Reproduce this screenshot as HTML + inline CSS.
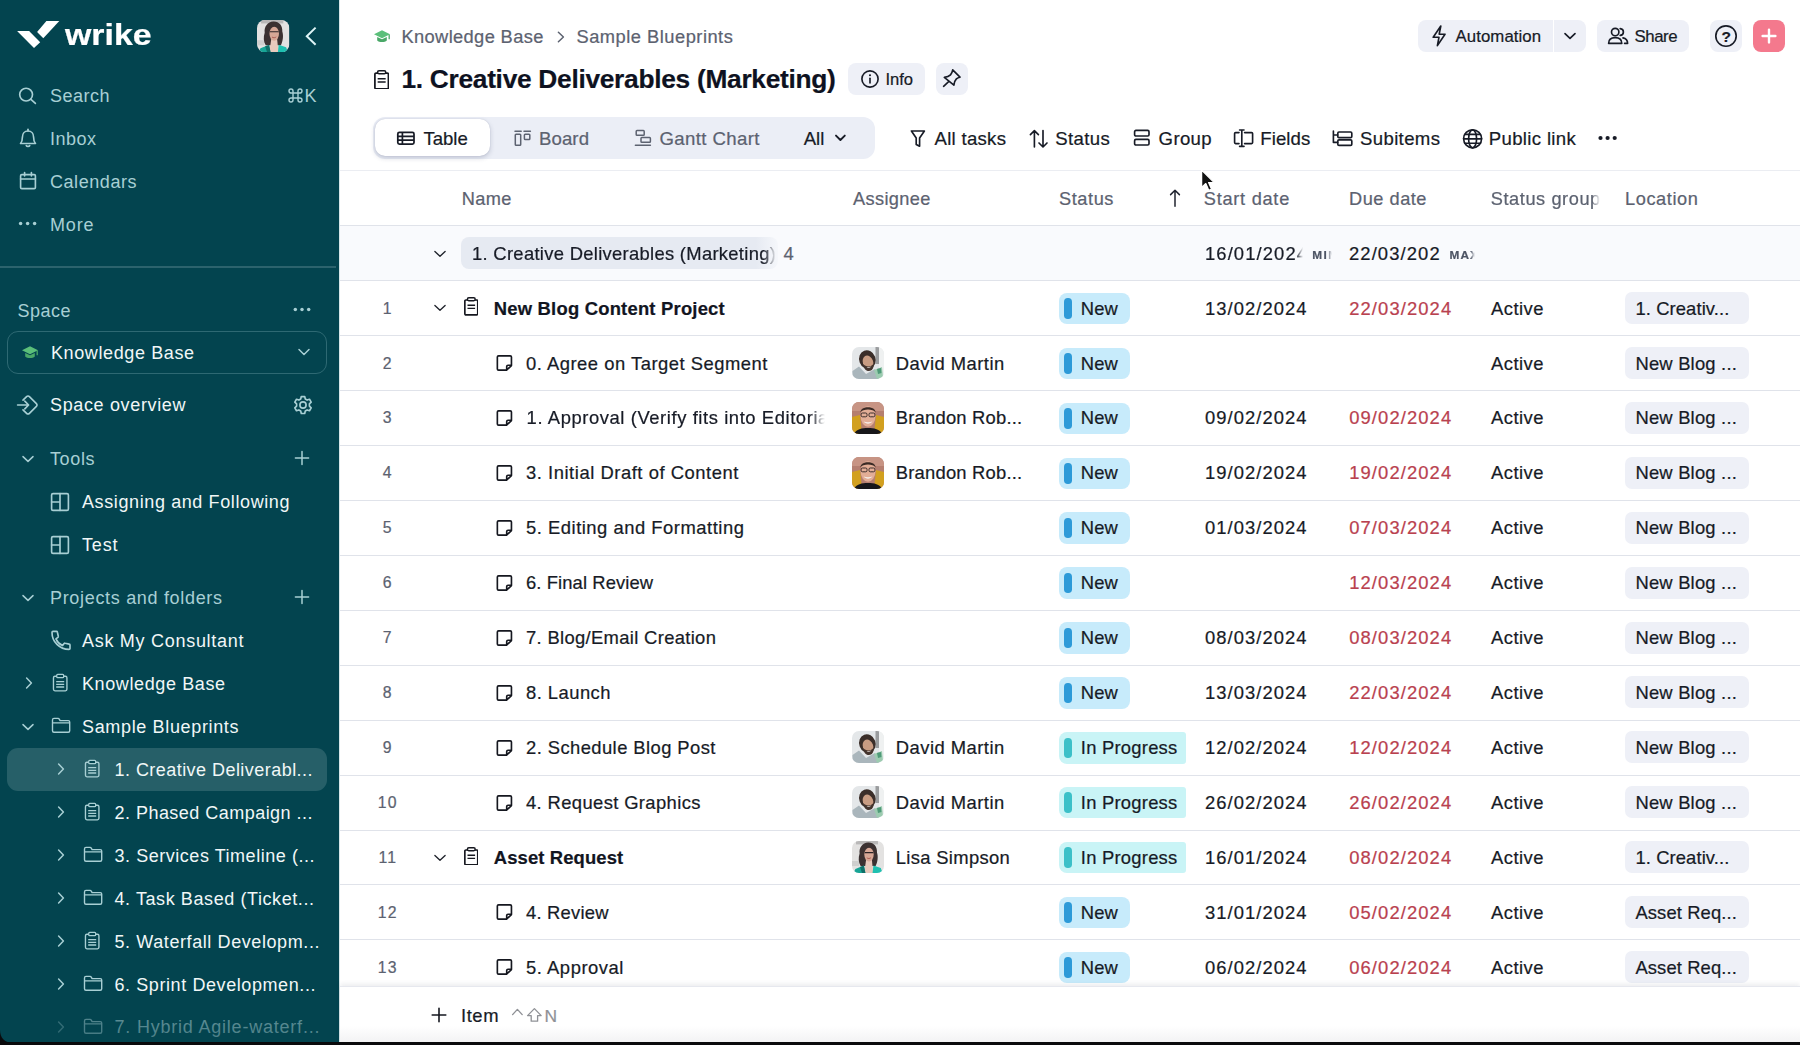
<!DOCTYPE html>
<html><head><meta charset="utf-8"><title>Wrike</title>
<style>
html,body{margin:0;padding:0;overflow:hidden;}
body{width:1800px;height:1045px;overflow:hidden;background:#fff;font-family:"Liberation Sans",sans-serif;position:relative;}
.t{position:absolute;white-space:nowrap;-webkit-text-stroke:0.22px currentColor;}
.b{position:absolute;}
</style></head><body>
<div class="b" style="left:0.00px;top:0.00px;width:339.00px;height:1045.00px;background:#03444f;"></div>
<div class="b" style="left:339.00px;top:0.00px;width:1.00px;height:1045.00px;background:#d6e6e8;"></div>
<div class="b" style="left:0.00px;top:266.40px;width:336.00px;height:1.20px;background:#2c636d;"></div>
<svg class="b" style="left:10.00px;top:12.00px;" width="60" height="44" viewBox="0 0 60 44" fill="none"><polygon points="7.1,19.1 19.1,19.1 30.2,30.2 24,36" fill="#fff"/><polygon points="27.1,20 36.4,8.9 49.3,8.9 33.3,26.2" fill="#fff"/></svg>
<div class="t" style="left:64.80px;top:19.70px;height:30px;line-height:30px;font-size:28.6px;color:#fff;transform-origin:0 50%;transform:scaleX(1.1841);font-weight:700;">wrike</div>
<svg class="b" style="left:257.20px;top:20.00px;" width="32.4" height="32.4" viewBox="0 0 32 32" fill="none"><defs><clipPath id="ua"><rect width="32" height="32" rx="8"/></clipPath></defs><g clip-path="url(#ua)"><rect width="32" height="32" fill="#e3e2e1"/><rect x="4" y="0" width="22" height="3.4" fill="#b9b8b8"/><rect x="0" y="20" width="7" height="5" fill="#cfcfce"/>
<path d="M16 1.6 C21.6 1.2 25.4 5.6 25 11.4 C26.4 15.6 25.6 21.2 23.6 25 L8.6 25 C6.4 21.6 6.2 16.6 7.6 12.6 C6.8 6.8 10.6 1.8 16 1.6 Z" fill="#3b3131"/>
<path d="M14.2 18 L19.8 18 L21.2 32 L12.2 32 Z" fill="#e8cabd"/>
<ellipse cx="17" cy="13.6" rx="4.7" ry="6.9" fill="#d6a796"/>
<path d="M12.8 11.6 H21.4" stroke="#2a2224" stroke-width="1.1"/>
<path d="M14.8 16.8 C16 17.8 18 17.8 19 16.6" stroke="#a9584f" stroke-width="0.9" fill="none"/>
<path d="M1.6 32 L3.4 28 L11.8 24.6 L13.4 32 Z" fill="#17a596"/><path d="M8 26 L12 24.6 L13.4 32 L10 32Z" fill="#0f6f68"/>
<path d="M20.6 32 L21.4 24.4 L28.8 27 L30.6 32 Z" fill="#1fc0b0"/></g></svg>
<svg class="b" style="left:302.00px;top:24.00px;" width="20" height="24" viewBox="0 0 20 24" fill="none"><path d="M13.6 3.6 L4.8 12.2 L13.6 20.8" stroke="#def4f6" stroke-width="2" stroke-linecap="butt" stroke-linejoin="miter"/></svg>
<svg class="b" style="left:16.00px;top:83.00px;" width="24" height="24" viewBox="0 0 24 24" fill="none"><circle cx="10.1" cy="11.6" r="6.4" stroke="#a8cfd4" stroke-width="1.65" stroke-linecap="round" stroke-linejoin="round"/><path d="M14.9 16.3 L19.4 20.4" stroke="#a8cfd4" stroke-width="1.65" stroke-linecap="round" stroke-linejoin="round"/></svg>
<div class="t" style="left:50.00px;top:80.60px;height:30px;line-height:30px;font-size:18px;color:#a8cfd4;letter-spacing:0.493px;-webkit-text-stroke:0;">Search</div>
<svg class="b" style="left:287.00px;top:86.50px;" width="17" height="17" viewBox="0 0 17 17" fill="none"><path d="M6 6 H11 V11 H6 Z M6 6 H4.2 C2.9 6 2 5 2 3.9 C2 2.8 2.9 2 4 2 C5.1 2 6 2.9 6 4 Z M11 6 V4 C11 2.9 11.9 2 13 2 C14.1 2 15 2.8 15 3.9 C15 5 14.1 6 12.8 6 Z M11 11 H12.8 C14.1 11 15 12 15 13.1 C15 14.2 14.1 15 13 15 C11.9 15 11 14.1 11 13 Z M6 11 V13 C6 14.1 5.1 15 4 15 C2.9 15 2 14.2 2 13.1 C2 12 2.9 11 4.2 11 Z" stroke="#a8cfd4" stroke-width="1.4" stroke-linejoin="round"/></svg>
<div class="t" style="left:304.50px;top:80.60px;height:30px;line-height:30px;font-size:18px;color:#a8cfd4;-webkit-text-stroke:0;">K</div>
<svg class="b" style="left:16.00px;top:126.00px;" width="24" height="24" viewBox="0 0 24 24" fill="none"><path d="M4.5 17.5 H19.5 C18 16 17.6 14 17.6 11.2 C17.6 7.6 15.4 5 12 5 C8.6 5 6.4 7.6 6.4 11.2 C6.4 14 6 16 4.5 17.5 Z" stroke="#a8cfd4" stroke-width="1.65" stroke-linecap="round" stroke-linejoin="round"/><path d="M10.3 19.6 C10.8 20.6 13.2 20.6 13.7 19.6" stroke="#a8cfd4" stroke-width="1.65" stroke-linecap="round" stroke-linejoin="round"/><path d="M12 3.2 V5" stroke="#a8cfd4" stroke-width="1.65" stroke-linecap="round" stroke-linejoin="round"/></svg>
<div class="t" style="left:50.00px;top:123.60px;height:30px;line-height:30px;font-size:18px;color:#a8cfd4;letter-spacing:0.492px;-webkit-text-stroke:0;">Inbox</div>
<svg class="b" style="left:16.00px;top:169.00px;" width="24" height="24" viewBox="0 0 24 24" fill="none"><rect x="4.6" y="5.6" width="14.8" height="14" rx="1.2" stroke="#a8cfd4" stroke-width="1.65" stroke-linecap="round" stroke-linejoin="round"/><path d="M4.6 10 H19.4 M8.6 3.6 V7 M15.4 3.6 V7" stroke="#a8cfd4" stroke-width="1.65" stroke-linecap="round" stroke-linejoin="round"/></svg>
<div class="t" style="left:50.00px;top:166.60px;height:30px;line-height:30px;font-size:18px;color:#a8cfd4;letter-spacing:0.556px;-webkit-text-stroke:0;">Calendars</div>
<svg class="b" style="left:16.00px;top:212.00px;" width="24" height="24" viewBox="0 0 24 24" fill="none"><circle cx="4.6" cy="11.6" r="1.75" fill="#a8cfd4"/><circle cx="11.6" cy="11.6" r="1.75" fill="#a8cfd4"/><circle cx="18.6" cy="11.6" r="1.75" fill="#a8cfd4"/></svg>
<div class="t" style="left:50.00px;top:209.60px;height:30px;line-height:30px;font-size:18px;color:#a8cfd4;letter-spacing:0.829px;-webkit-text-stroke:0;">More</div>
<div class="t" style="left:17.50px;top:295.90px;height:30px;line-height:30px;font-size:18px;color:#a8cfd4;letter-spacing:0.490px;-webkit-text-stroke:0;">Space</div>
<svg class="b" style="left:291.00px;top:298.40px;" width="24" height="24" viewBox="0 0 24 24" fill="none"><circle cx="4.3" cy="11.5" r="1.75" fill="#a8cfd4"/><circle cx="11" cy="11.5" r="1.75" fill="#a8cfd4"/><circle cx="17.7" cy="11.5" r="1.75" fill="#a8cfd4"/></svg>
<div class="b" style="left:7.00px;top:331.00px;width:319.50px;height:42.60px;background:transparent;border-radius:11px;box-sizing:border-box;border:1.5px solid #2e6973;"></div>
<svg class="b" style="left:21.00px;top:343.50px;" width="18" height="17" viewBox="0 0 18 17" fill="none"><path d="M1 6.2 L9 2.2 L17 6.2 L9 10.2 Z" fill="#5bbf7a"/><path d="M4.2 8.9 V12.4 C6 14.6 12 14.6 13.8 12.4 V8.9 L9 11.3 Z" fill="#4aa868"/><path d="M16.2 6.6 V11.2" stroke="#4aa868" stroke-width="1.3"/></svg>
<div class="t" style="left:51.00px;top:337.60px;height:30px;line-height:30px;font-size:18px;color:#f1f7f7;letter-spacing:0.608px;-webkit-text-stroke:0;">Knowledge Base</div>
<svg class="b" style="left:295.00px;top:344.00px;" width="18" height="16" viewBox="0 0 18 16" fill="none"><path d="M4 5.5 L9 10.5 L14 5.5" stroke="#a8cfd4" stroke-width="1.5" stroke-linecap="round" stroke-linejoin="round"/></svg>
<svg class="b" style="left:16.00px;top:393.00px;" width="24" height="24" viewBox="0 0 24 24" fill="none"><path d="M1.6 12 H12.4 M8.8 8.2 L12.6 12 L8.8 15.8" stroke="#a8cfd4" stroke-width="1.65" stroke-linecap="round" stroke-linejoin="round"/><path d="M7 7.2 L10.6 3.6 C11.4 2.8 12.6 2.8 13.4 3.6 L20.4 10.6 C21.2 11.4 21.2 12.6 20.4 13.4 L13.4 20.4 C12.6 21.2 11.4 21.2 10.6 20.4 L7 16.8" stroke="#a8cfd4" stroke-width="1.65" stroke-linecap="round" stroke-linejoin="round"/></svg>
<div class="t" style="left:50.00px;top:390.10px;height:30px;line-height:30px;font-size:18px;color:#f1f7f7;letter-spacing:0.649px;-webkit-text-stroke:0;">Space overview</div>
<svg class="b" style="left:291.00px;top:393.00px;" width="24" height="24" viewBox="0 0 24 24" fill="none"><circle cx="12" cy="12" r="3.1" stroke="#a8cfd4" stroke-width="1.65" stroke-linecap="round" stroke-linejoin="round"/><path d="M10.3 2.8 H13.7 L14.3 5.3 L16.1 6.3 L18.5 5.5 L20.2 8.4 L18.4 10.2 V12.3 L20.2 14.1 L18.5 17 L16.1 16.2 L14.3 17.2 L13.7 19.7 H10.3 L9.7 17.2 L7.9 16.2 L5.5 17 L3.8 14.1 L5.6 12.3 V10.2 L3.8 8.4 L5.5 5.5 L7.9 6.3 L9.7 5.3 Z" stroke="#a8cfd4" stroke-width="1.65" stroke-linecap="round" stroke-linejoin="round" transform="translate(0 0.75)"/></svg>
<svg class="b" style="left:19.00px;top:450.50px;" width="18" height="16" viewBox="0 0 18 16" fill="none"><path d="M4 5.6 L9 10.4 L14 5.6" stroke="#a8cfd4" stroke-width="1.5" stroke-linecap="round" stroke-linejoin="round"/></svg>
<div class="t" style="left:50.00px;top:443.60px;height:30px;line-height:30px;font-size:18px;color:#a8cfd4;letter-spacing:0.620px;-webkit-text-stroke:0;">Tools</div>
<svg class="b" style="left:292.00px;top:447.50px;" width="20" height="20" viewBox="0 0 20 20" fill="none"><path d="M10 3.4 V16.6 M3.4 10 H16.6" stroke="#a8cfd4" stroke-width="1.5" stroke-linecap="round"/></svg>
<svg class="b" style="left:49.00px;top:490.80px;" width="22" height="22" viewBox="0 0 22 22" fill="none"><rect x="2.6" y="2.6" width="16.8" height="16.8" rx="1.4" stroke="#a8cfd4" stroke-width="1.65" stroke-linecap="round" stroke-linejoin="round"/><path d="M11 2.6 V19.4 M2.6 11 H11" stroke="#a8cfd4" stroke-width="1.65" stroke-linecap="round" stroke-linejoin="round"/></svg>
<div class="t" style="left:82.00px;top:486.60px;height:30px;line-height:30px;font-size:18px;color:#f1f7f7;letter-spacing:0.608px;-webkit-text-stroke:0;">Assigning and Following</div>
<svg class="b" style="left:49.00px;top:533.80px;" width="22" height="22" viewBox="0 0 22 22" fill="none"><rect x="2.6" y="2.6" width="16.8" height="16.8" rx="1.4" stroke="#a8cfd4" stroke-width="1.65" stroke-linecap="round" stroke-linejoin="round"/><path d="M11 2.6 V19.4 M2.6 11 H11" stroke="#a8cfd4" stroke-width="1.65" stroke-linecap="round" stroke-linejoin="round"/></svg>
<div class="t" style="left:82.00px;top:529.60px;height:30px;line-height:30px;font-size:18px;color:#f1f7f7;letter-spacing:0.829px;-webkit-text-stroke:0;">Test</div>
<svg class="b" style="left:19.00px;top:589.50px;" width="18" height="16" viewBox="0 0 18 16" fill="none"><path d="M4 5.6 L9 10.4 L14 5.6" stroke="#a8cfd4" stroke-width="1.5" stroke-linecap="round" stroke-linejoin="round"/></svg>
<div class="t" style="left:50.00px;top:582.60px;height:30px;line-height:30px;font-size:18px;color:#a8cfd4;letter-spacing:0.680px;-webkit-text-stroke:0;">Projects and folders</div>
<svg class="b" style="left:292.00px;top:587.00px;" width="20" height="20" viewBox="0 0 20 20" fill="none"><path d="M10 3.4 V16.6 M3.4 10 H16.6" stroke="#a8cfd4" stroke-width="1.5" stroke-linecap="round"/></svg>
<svg class="b" style="left:49.00px;top:628.80px;" width="24" height="24" viewBox="0 0 24 24" fill="none"><path d="M3 3.4 C3 2.8 3.5 2.4 4 2.4 H7.4 C7.9 2.4 8.3 2.7 8.4 3.2 L9.3 7.2 C9.4 7.6 9.2 8 8.9 8.3 L6.9 9.8 C8.2 12.8 10.6 15.2 13.6 16.6 L15.1 14.6 C15.4 14.2 15.8 14.1 16.2 14.2 L20.2 15.1 C20.7 15.2 21 15.6 21 16.1 V19.4 C21 20 20.6 20.4 20 20.4 C10.6 20.4 3 12.8 3 3.4 Z" stroke="#a8cfd4" stroke-width="1.65" stroke-linecap="round" stroke-linejoin="round"/></svg>
<div class="t" style="left:82.00px;top:625.60px;height:30px;line-height:30px;font-size:18px;color:#f1f7f7;letter-spacing:0.715px;-webkit-text-stroke:0;">Ask My Consultant</div>
<svg class="b" style="left:20.50px;top:674.00px;" width="16" height="18" viewBox="0 0 16 18" fill="none"><path d="M5.6 4 L10.4 9 L5.6 14" stroke="#a8cfd4" stroke-width="1.5" stroke-linecap="round" stroke-linejoin="round" opacity="1"/></svg>
<svg class="b" style="left:51.80px;top:672.50px;" width="16.4" height="20" viewBox="0 0 18 22" fill="none"><g opacity="1"><rect x="1.6" y="3.6" width="14.8" height="16" rx="1.6" stroke="#a8cfd4" stroke-width="1.5"/><rect x="5.2" y="1.5" width="7.6" height="3.6" rx="1" fill="#03444f" stroke="#a8cfd4" stroke-width="1.4"/><path d="M4.6 9.4 H13.4 M4.6 12.4 H13.4 M4.6 15.4 H13.4" stroke="#a8cfd4" stroke-width="1.4"/></g></svg>
<div class="t" style="left:82.00px;top:668.60px;height:30px;line-height:30px;font-size:18px;color:#f1f7f7;letter-spacing:0.608px;-webkit-text-stroke:0;">Knowledge Base</div>
<svg class="b" style="left:19.00px;top:718.50px;" width="18" height="16" viewBox="0 0 18 16" fill="none"><path d="M4 5.6 L9 10.4 L14 5.6" stroke="#a8cfd4" stroke-width="1.5" stroke-linecap="round" stroke-linejoin="round"/></svg>
<svg class="b" style="left:50.60px;top:716.30px;" width="20.4" height="18.5" viewBox="0 0 22 20" fill="none"><path d="M1.6 4.2 C1.6 3.3 2.3 2.6 3.2 2.6 H7.6 C8.2 2.6 8.6 2.9 8.9 3.4 L9.8 5 H18.6 C19.5 5 20.2 5.7 20.2 6.6 V16 C20.2 16.9 19.5 17.6 18.6 17.6 H3.2 C2.3 17.6 1.6 16.9 1.6 16 Z M1.6 7.4 H20.2" stroke="#a8cfd4" stroke-width="1.5" stroke-linejoin="round" opacity="1"/></svg>
<div class="t" style="left:82.00px;top:711.60px;height:30px;line-height:30px;font-size:18px;color:#f1f7f7;letter-spacing:0.651px;-webkit-text-stroke:0;">Sample Blueprints</div>
<div class="b" style="left:7.00px;top:748.00px;width:319.50px;height:42.50px;background:#265f68;border-radius:11px;"></div>
<svg class="b" style="left:53.00px;top:760.00px;" width="16" height="18" viewBox="0 0 16 18" fill="none"><path d="M5.6 4 L10.4 9 L5.6 14" stroke="#a8cfd4" stroke-width="1.5" stroke-linecap="round" stroke-linejoin="round" opacity="1"/></svg>
<svg class="b" style="left:83.80px;top:758.50px;" width="16.4" height="20" viewBox="0 0 18 22" fill="none"><g opacity="1"><rect x="1.6" y="3.6" width="14.8" height="16" rx="1.6" stroke="#a8cfd4" stroke-width="1.5"/><rect x="5.2" y="1.5" width="7.6" height="3.6" rx="1" fill="#03444f" stroke="#a8cfd4" stroke-width="1.4"/><path d="M4.6 9.4 H13.4 M4.6 12.4 H13.4 M4.6 15.4 H13.4" stroke="#a8cfd4" stroke-width="1.4"/></g></svg>
<div class="t" style="left:114.50px;top:754.60px;height:30px;line-height:30px;font-size:18px;color:#f1f7f7;letter-spacing:0.455px;-webkit-text-stroke:0;">1. Creative Deliverabl...</div>
<svg class="b" style="left:53.00px;top:803.00px;" width="16" height="18" viewBox="0 0 16 18" fill="none"><path d="M5.6 4 L10.4 9 L5.6 14" stroke="#a8cfd4" stroke-width="1.5" stroke-linecap="round" stroke-linejoin="round" opacity="1"/></svg>
<svg class="b" style="left:83.80px;top:801.50px;" width="16.4" height="20" viewBox="0 0 18 22" fill="none"><g opacity="1"><rect x="1.6" y="3.6" width="14.8" height="16" rx="1.6" stroke="#a8cfd4" stroke-width="1.5"/><rect x="5.2" y="1.5" width="7.6" height="3.6" rx="1" fill="#03444f" stroke="#a8cfd4" stroke-width="1.4"/><path d="M4.6 9.4 H13.4 M4.6 12.4 H13.4 M4.6 15.4 H13.4" stroke="#a8cfd4" stroke-width="1.4"/></g></svg>
<div class="t" style="left:114.50px;top:797.60px;height:30px;line-height:30px;font-size:18px;color:#f1f7f7;letter-spacing:0.471px;-webkit-text-stroke:0;">2. Phased Campaign ...</div>
<svg class="b" style="left:53.00px;top:846.00px;" width="16" height="18" viewBox="0 0 16 18" fill="none"><path d="M5.6 4 L10.4 9 L5.6 14" stroke="#a8cfd4" stroke-width="1.5" stroke-linecap="round" stroke-linejoin="round" opacity="1"/></svg>
<svg class="b" style="left:82.60px;top:845.30px;" width="20.4" height="18.5" viewBox="0 0 22 20" fill="none"><path d="M1.6 4.2 C1.6 3.3 2.3 2.6 3.2 2.6 H7.6 C8.2 2.6 8.6 2.9 8.9 3.4 L9.8 5 H18.6 C19.5 5 20.2 5.7 20.2 6.6 V16 C20.2 16.9 19.5 17.6 18.6 17.6 H3.2 C2.3 17.6 1.6 16.9 1.6 16 Z M1.6 7.4 H20.2" stroke="#a8cfd4" stroke-width="1.5" stroke-linejoin="round" opacity="1"/></svg>
<div class="t" style="left:114.50px;top:840.60px;height:30px;line-height:30px;font-size:18px;color:#f1f7f7;letter-spacing:0.539px;-webkit-text-stroke:0;">3. Services Timeline (...</div>
<svg class="b" style="left:53.00px;top:889.00px;" width="16" height="18" viewBox="0 0 16 18" fill="none"><path d="M5.6 4 L10.4 9 L5.6 14" stroke="#a8cfd4" stroke-width="1.5" stroke-linecap="round" stroke-linejoin="round" opacity="1"/></svg>
<svg class="b" style="left:82.60px;top:888.30px;" width="20.4" height="18.5" viewBox="0 0 22 20" fill="none"><path d="M1.6 4.2 C1.6 3.3 2.3 2.6 3.2 2.6 H7.6 C8.2 2.6 8.6 2.9 8.9 3.4 L9.8 5 H18.6 C19.5 5 20.2 5.7 20.2 6.6 V16 C20.2 16.9 19.5 17.6 18.6 17.6 H3.2 C2.3 17.6 1.6 16.9 1.6 16 Z M1.6 7.4 H20.2" stroke="#a8cfd4" stroke-width="1.5" stroke-linejoin="round" opacity="1"/></svg>
<div class="t" style="left:114.50px;top:883.60px;height:30px;line-height:30px;font-size:18px;color:#f1f7f7;letter-spacing:0.584px;-webkit-text-stroke:0;">4. Task Based (Ticket...</div>
<svg class="b" style="left:53.00px;top:932.00px;" width="16" height="18" viewBox="0 0 16 18" fill="none"><path d="M5.6 4 L10.4 9 L5.6 14" stroke="#a8cfd4" stroke-width="1.5" stroke-linecap="round" stroke-linejoin="round" opacity="1"/></svg>
<svg class="b" style="left:83.80px;top:930.50px;" width="16.4" height="20" viewBox="0 0 18 22" fill="none"><g opacity="1"><rect x="1.6" y="3.6" width="14.8" height="16" rx="1.6" stroke="#a8cfd4" stroke-width="1.5"/><rect x="5.2" y="1.5" width="7.6" height="3.6" rx="1" fill="#03444f" stroke="#a8cfd4" stroke-width="1.4"/><path d="M4.6 9.4 H13.4 M4.6 12.4 H13.4 M4.6 15.4 H13.4" stroke="#a8cfd4" stroke-width="1.4"/></g></svg>
<div class="t" style="left:114.50px;top:926.60px;height:30px;line-height:30px;font-size:18px;color:#f1f7f7;letter-spacing:0.591px;-webkit-text-stroke:0;">5. Waterfall Developm...</div>
<svg class="b" style="left:53.00px;top:975.00px;" width="16" height="18" viewBox="0 0 16 18" fill="none"><path d="M5.6 4 L10.4 9 L5.6 14" stroke="#a8cfd4" stroke-width="1.5" stroke-linecap="round" stroke-linejoin="round" opacity="1"/></svg>
<svg class="b" style="left:82.60px;top:974.30px;" width="20.4" height="18.5" viewBox="0 0 22 20" fill="none"><path d="M1.6 4.2 C1.6 3.3 2.3 2.6 3.2 2.6 H7.6 C8.2 2.6 8.6 2.9 8.9 3.4 L9.8 5 H18.6 C19.5 5 20.2 5.7 20.2 6.6 V16 C20.2 16.9 19.5 17.6 18.6 17.6 H3.2 C2.3 17.6 1.6 16.9 1.6 16 Z M1.6 7.4 H20.2" stroke="#a8cfd4" stroke-width="1.5" stroke-linejoin="round" opacity="1"/></svg>
<div class="t" style="left:114.50px;top:969.60px;height:30px;line-height:30px;font-size:18px;color:#f1f7f7;letter-spacing:0.586px;-webkit-text-stroke:0;">6. Sprint Developmen...</div>
<svg class="b" style="left:53.00px;top:1017.50px;" width="16" height="18" viewBox="0 0 16 18" fill="none"><path d="M5.6 4 L10.4 9 L5.6 14" stroke="#3f757e" stroke-width="1.5" stroke-linecap="round" stroke-linejoin="round" opacity="1"/></svg>
<svg class="b" style="left:82.60px;top:1016.80px;" width="20.4" height="18.5" viewBox="0 0 22 20" fill="none"><path d="M1.6 4.2 C1.6 3.3 2.3 2.6 3.2 2.6 H7.6 C8.2 2.6 8.6 2.9 8.9 3.4 L9.8 5 H18.6 C19.5 5 20.2 5.7 20.2 6.6 V16 C20.2 16.9 19.5 17.6 18.6 17.6 H3.2 C2.3 17.6 1.6 16.9 1.6 16 Z M1.6 7.4 H20.2" stroke="#5f8f97" stroke-width="1.5" stroke-linejoin="round" opacity="1"/></svg>
<div class="t" style="left:114.50px;top:1012.10px;height:30px;line-height:30px;font-size:18px;color:#6a989f;letter-spacing:0.788px;-webkit-text-stroke:0;">7. Hybrid Agile-waterf...</div>
<div class="b" style="left:0.00px;top:1000.00px;width:339.00px;height:45.00px;background:linear-gradient(to bottom, rgba(3,68,79,0) 0%, rgba(3,68,79,.35) 100%);"></div>
<svg class="b" style="left:373.20px;top:28.20px;" width="18" height="17" viewBox="0 0 18 17" fill="none"><path d="M1 6.2 L9 2.2 L17 6.2 L9 10.2 Z" fill="#5bbf7a"/><path d="M4.2 8.9 V12.4 C6 14.6 12 14.6 13.8 12.4 V8.9 L9 11.3 Z" fill="#4aa868"/><path d="M16.2 6.6 V11.2" stroke="#4aa868" stroke-width="1.3"/></svg>
<div class="t" style="left:401.50px;top:21.80px;height:30px;line-height:30px;font-size:18.3px;color:#5c6270;letter-spacing:0.357px;">Knowledge Base</div>
<svg class="b" style="left:554.00px;top:27.50px;" width="14" height="18" viewBox="0 0 14 18" fill="none"><path d="M4.4 4.2 L9.4 9 L4.4 13.8" stroke="#5c6270" stroke-width="1.5" stroke-linecap="round" stroke-linejoin="round"/></svg>
<div class="t" style="left:576.50px;top:21.80px;height:30px;line-height:30px;font-size:18.3px;color:#5c6270;letter-spacing:0.499px;">Sample Blueprints</div>
<svg class="b" style="left:373.60px;top:69.50px;" width="15.33" height="19.740000000000002" viewBox="0 0 14.6 18.8" fill="none"><rect x="0.85" y="3.0" width="12.9" height="14.9" rx="1.1" stroke="#15171f" stroke-width="1.65"/><rect x="3.4" y="0.75" width="7.8" height="2.9" rx="1.4" fill="#fff" stroke="#15171f" stroke-width="1.45"/><path d="M3.5 8.3 H11.1 M3.5 11.4 H11.1" stroke="#15171f" stroke-width="1.35"/></svg>
<div class="t" style="left:401.40px;top:64.10px;height:30px;line-height:30px;font-size:26.3px;color:#0e1221;letter-spacing:-0.282px;font-weight:700;height:34px;line-height:34px;margin-top:-2px;">1. Creative Deliverables (Marketing)</div>
<div class="b" style="left:848.00px;top:63.00px;width:77.00px;height:31.80px;background:#eef0f7;border-radius:8px;"></div>
<svg class="b" style="left:859.50px;top:69.00px;" width="20" height="20" viewBox="0 0 20 20" fill="none"><circle cx="10" cy="10" r="8.1" stroke="#171b26" stroke-width="1.65" stroke-linecap="round" stroke-linejoin="round"/><path d="M10 9.2 V14" stroke="#171b26" stroke-width="1.65" stroke-linecap="round" stroke-linejoin="round"/><circle cx="10" cy="6.2" r="1.05" fill="#171b26"/></svg>
<div class="t" style="left:885.50px;top:65.10px;height:30px;line-height:30px;font-size:16.6px;color:#171b26;letter-spacing:-0.063px;">Info</div>
<div class="b" style="left:936.00px;top:63.00px;width:32.00px;height:31.80px;background:#eef0f7;border-radius:8px;"></div>
<svg class="b" style="left:941.10px;top:68.20px;" width="21" height="21" viewBox="0 0 21 21" fill="none"><path d="M11.7 1.9 L19 9.2 C17.4 9.4 16.4 9.9 15.4 10.9 C14 12.3 13.2 14.2 12.9 17.1 L3.3 9.4 C6.2 9 8 8.3 9.5 6.8 C10.6 5.7 11.3 4.2 11.7 1.9 Z M7.9 13.4 L2.6 18.3" stroke="#171b26" stroke-width="1.65" stroke-linecap="round" stroke-linejoin="round"/></svg>
<div class="b" style="left:373.00px;top:116.50px;width:502.00px;height:42.00px;background:#ebeef6;border-radius:12px;"></div>
<div class="b" style="left:374.60px;top:118.80px;width:115.20px;height:37.60px;background:#fff;border-radius:10px;box-shadow:0 2px 5px rgba(40,50,90,.22),0 0 1px rgba(40,50,90,.25);"></div>
<svg class="b" style="left:396.00px;top:129.00px;" width="21" height="18" viewBox="0 0 21 18" fill="none"><rect x="1.8" y="3.4" width="16.2" height="11.6" rx="1.6" stroke="#171b26" stroke-width="1.75"/><path d="M1.8 7.3 H18 M1.8 11.1 H18 M6.4 3.4 V15" stroke="#171b26" stroke-width="1.7"/></svg>
<div class="t" style="left:423.60px;top:123.60px;height:30px;line-height:30px;font-size:18.6px;color:#171b26;letter-spacing:-0.067px;">Table</div>
<svg class="b" style="left:513.00px;top:128.00px;" width="20" height="20" viewBox="0 0 20 20" fill="none"><path d="M2 3.2 H8.2 M11 3.2 H17.4" stroke="#5c6270" stroke-width="1.5" stroke-linecap="round" stroke-linejoin="round"/><rect x="2.3" y="6.2" width="5.4" height="11" rx="0.8" stroke="#5c6270" stroke-width="1.5" stroke-linecap="round" stroke-linejoin="round"/><rect x="11.4" y="6.2" width="5.4" height="5.4" rx="0.8" stroke="#5c6270" stroke-width="1.5" stroke-linecap="round" stroke-linejoin="round"/></svg>
<div class="t" style="left:539.00px;top:123.60px;height:30px;line-height:30px;font-size:18.6px;color:#5c6270;letter-spacing:0.091px;">Board</div>
<svg class="b" style="left:633.00px;top:128.00px;" width="20" height="20" viewBox="0 0 20 20" fill="none"><rect x="3.2" y="2.6" width="8" height="4.6" rx="0.8" stroke="#5c6270" stroke-width="1.5" stroke-linecap="round" stroke-linejoin="round"/><rect x="8" y="9.6" width="9.4" height="4.6" rx="0.8" stroke="#5c6270" stroke-width="1.5" stroke-linecap="round" stroke-linejoin="round"/><path d="M2.4 17.2 H17.4" stroke="#5c6270" stroke-width="1.5" stroke-linecap="round" stroke-linejoin="round"/></svg>
<div class="t" style="left:659.50px;top:123.60px;height:30px;line-height:30px;font-size:18.6px;color:#5c6270;letter-spacing:0.386px;">Gantt Chart</div>
<div class="t" style="left:803.80px;top:123.60px;height:30px;line-height:30px;font-size:18.6px;color:#171b26;letter-spacing:-0.086px;">All</div>
<svg class="b" style="left:831.00px;top:130.00px;" width="18" height="16" viewBox="0 0 18 16" fill="none"><path d="M5 5.6 L9.4 10 L13.8 5.6" stroke="#171b26" stroke-width="1.9" stroke-linecap="round" stroke-linejoin="round"/></svg>
<svg class="b" style="left:906.00px;top:127.00px;" width="24" height="24" viewBox="0 0 24 24" fill="none"><path d="M5.4 4 H18.4 L13.6 11 V19.2 L10.2 17.4 V11 Z" stroke="#171b26" stroke-width="1.65" stroke-linecap="round" stroke-linejoin="round"/></svg>
<div class="t" style="left:934.50px;top:123.60px;height:30px;line-height:30px;font-size:18.6px;color:#171b26;letter-spacing:0.281px;">All tasks</div>
<svg class="b" style="left:1027.00px;top:127.00px;" width="24" height="24" viewBox="0 0 24 24" fill="none"><path d="M7.4 20 V3.6 M3.4 7.6 L7.4 3.6 L11.4 7.6 M16 3.6 V20 M12 16 L16 20 L20 16" stroke="#171b26" stroke-width="1.65" stroke-linecap="round" stroke-linejoin="round"/></svg>
<div class="t" style="left:1055.30px;top:123.60px;height:30px;line-height:30px;font-size:18.6px;color:#171b26;letter-spacing:0.354px;">Status</div>
<svg class="b" style="left:1131.00px;top:127.00px;" width="22" height="22" viewBox="0 0 22 22" fill="none"><rect x="3.6" y="3.4" width="14.4" height="5.6" rx="1.3" stroke="#171b26" stroke-width="1.65" stroke-linecap="round" stroke-linejoin="round"/><rect x="3.6" y="12.4" width="14.4" height="5.6" rx="1.3" stroke="#171b26" stroke-width="1.65" stroke-linecap="round" stroke-linejoin="round"/></svg>
<div class="t" style="left:1158.60px;top:123.60px;height:30px;line-height:30px;font-size:18.6px;color:#171b26;letter-spacing:0.326px;">Group</div>
<svg class="b" style="left:1232.00px;top:127.00px;" width="24" height="24" viewBox="0 0 24 24" fill="none"><path d="M7 5.6 H3.6 C3 5.6 2.6 6 2.6 6.6 V15.6 C2.6 16.2 3 16.6 3.6 16.6 H7 M12.6 5.6 H19.6 C20.2 5.6 20.6 6 20.6 6.6 V15.6 C20.6 16.2 20.2 16.6 19.6 16.6 H12.6 M9.8 3 V19.4 M7.6 3 H12 M7.6 19.4 H12" stroke="#171b26" stroke-width="1.65" stroke-linecap="round" stroke-linejoin="round"/></svg>
<div class="t" style="left:1260.30px;top:123.60px;height:30px;line-height:30px;font-size:18.6px;color:#171b26;letter-spacing:0.077px;">Fields</div>
<svg class="b" style="left:1331.00px;top:127.00px;" width="24" height="24" viewBox="0 0 24 24" fill="none"><path d="M2.4 4 V15.4 H6.6 M2.4 8 H6.6" stroke="#171b26" stroke-width="1.65" stroke-linecap="round" stroke-linejoin="round"/><rect x="6.8" y="5" width="14" height="5.6" rx="1.2" stroke="#171b26" stroke-width="1.65" stroke-linecap="round" stroke-linejoin="round"/><rect x="6.8" y="12.8" width="14" height="5.6" rx="1.2" stroke="#171b26" stroke-width="1.65" stroke-linecap="round" stroke-linejoin="round"/></svg>
<div class="t" style="left:1360.00px;top:123.60px;height:30px;line-height:30px;font-size:18.6px;color:#171b26;letter-spacing:0.352px;">Subitems</div>
<svg class="b" style="left:1461.00px;top:126.50px;" width="24" height="24" viewBox="0 0 24 24" fill="none"><circle cx="11.6" cy="11.8" r="9" stroke="#171b26" stroke-width="1.65" stroke-linecap="round" stroke-linejoin="round"/><ellipse cx="11.6" cy="11.8" rx="4" ry="9" stroke="#171b26" stroke-width="1.65" stroke-linecap="round" stroke-linejoin="round"/><path d="M2.6 11.8 H20.6 M3.8 7.4 H19.4 M3.8 16.2 H19.4" stroke="#171b26" stroke-width="1.65" stroke-linecap="round" stroke-linejoin="round"/></svg>
<div class="t" style="left:1488.80px;top:123.60px;height:30px;line-height:30px;font-size:18.6px;color:#171b26;letter-spacing:0.326px;">Public link</div>
<svg class="b" style="left:1596.00px;top:128.00px;" width="24" height="20" viewBox="0 0 24 20" fill="none"><circle cx="4.5" cy="10" r="2.1" fill="#171b26"/><circle cx="11.6" cy="10" r="2.1" fill="#171b26"/><circle cx="18.7" cy="10" r="2.1" fill="#171b26"/></svg>
<div class="b" style="left:1418.00px;top:20.00px;width:134.70px;height:32.00px;background:#eef0f7;border-radius:8px 0 0 8px;"></div>
<div class="b" style="left:1554.00px;top:20.00px;width:32.00px;height:32.00px;background:#eef0f7;border-radius:0 8px 8px 0;"></div>
<svg class="b" style="left:1429.00px;top:24.00px;" width="20" height="24" viewBox="0 0 20 24" fill="none"><path d="M11.8 2 L4.2 13.2 H10 L8.4 21.6 L16 10.2 H10.2 Z" stroke="#171b26" stroke-width="1.65" stroke-linecap="round" stroke-linejoin="round"/></svg>
<div class="t" style="left:1455.60px;top:21.80px;height:30px;line-height:30px;font-size:16.8px;color:#171b26;letter-spacing:0.057px;">Automation</div>
<svg class="b" style="left:1560.50px;top:28.00px;" width="18" height="16" viewBox="0 0 18 16" fill="none"><path d="M4 5.6 L9 10.4 L14 5.6" stroke="#171b26" stroke-width="1.65" stroke-linecap="round" stroke-linejoin="round"/></svg>
<div class="b" style="left:1597.00px;top:20.00px;width:91.70px;height:32.00px;background:#eef0f7;border-radius:8px;"></div>
<svg class="b" style="left:1606.00px;top:25.00px;" width="24" height="22" viewBox="0 0 24 22" fill="none"><circle cx="9.2" cy="7" r="3.7" stroke="#171b26" stroke-width="1.65" stroke-linecap="round" stroke-linejoin="round"/><path d="M2.6 18.4 C2.6 14.6 5.4 12.6 9.2 12.6 C13 12.6 15.8 14.6 15.8 18.4 Z" stroke="#171b26" stroke-width="1.65" stroke-linecap="round" stroke-linejoin="round"/><path d="M14.2 3.6 C16 3.8 17.4 5.2 17.4 7 C17.4 8.8 16 10.3 14.2 10.4 M17 12.9 C19.8 13.5 21.6 15.4 21.6 18.4 H18.6" stroke="#171b26" stroke-width="1.65" stroke-linecap="round" stroke-linejoin="round"/></svg>
<div class="t" style="left:1634.60px;top:21.80px;height:30px;line-height:30px;font-size:16.8px;color:#171b26;letter-spacing:-0.458px;">Share</div>
<div class="b" style="left:1710.00px;top:20.00px;width:32.00px;height:32.00px;background:#eef0f7;border-radius:8px;"></div>
<svg class="b" style="left:1714.00px;top:24.00px;" width="24" height="24" viewBox="0 0 24 24" fill="none"><circle cx="12" cy="12" r="10.2" stroke="#171b26" stroke-width="1.65" stroke-linecap="round" stroke-linejoin="round"/></svg>
<div class="t" style="left:1721.60px;top:22.00px;height:30px;line-height:30px;font-size:15.5px;color:#171b26;font-weight:700;">?</div>
<div class="b" style="left:1753.00px;top:20.00px;width:32.40px;height:32.00px;background:#f4798d;border-radius:8px;"></div>
<svg class="b" style="left:1759.00px;top:26.00px;" width="20" height="20" viewBox="0 0 20 20" fill="none"><path d="M10 3.6 V16.4 M3.6 10 H16.4" stroke="#fff" stroke-width="2.4" stroke-linecap="round"/></svg>
<div class="b" style="left:340.00px;top:170.00px;width:1460.00px;height:1.00px;background:#ebedf2;"></div>
<div class="b" style="left:340.00px;top:225.40px;width:1460.00px;height:54.92px;background:#f9fafd;"></div>
<div class="b" style="left:340.00px;top:225.00px;width:1460.00px;height:1.00px;background:#e0e3ea;"></div>
<div class="b" style="left:340.00px;top:280.00px;width:1460.00px;height:1.00px;background:#e0e3ea;"></div>
<div class="b" style="left:340.00px;top:335.00px;width:1460.00px;height:1.00px;background:#e0e3ea;"></div>
<div class="b" style="left:340.00px;top:390.00px;width:1460.00px;height:1.00px;background:#e0e3ea;"></div>
<div class="b" style="left:340.00px;top:445.00px;width:1460.00px;height:1.00px;background:#e0e3ea;"></div>
<div class="b" style="left:340.00px;top:500.00px;width:1460.00px;height:1.00px;background:#e0e3ea;"></div>
<div class="b" style="left:340.00px;top:555.00px;width:1460.00px;height:1.00px;background:#e0e3ea;"></div>
<div class="b" style="left:340.00px;top:610.00px;width:1460.00px;height:1.00px;background:#e0e3ea;"></div>
<div class="b" style="left:340.00px;top:665.00px;width:1460.00px;height:1.00px;background:#e0e3ea;"></div>
<div class="b" style="left:340.00px;top:720.00px;width:1460.00px;height:1.00px;background:#e0e3ea;"></div>
<div class="b" style="left:340.00px;top:775.00px;width:1460.00px;height:1.00px;background:#e0e3ea;"></div>
<div class="b" style="left:340.00px;top:830.00px;width:1460.00px;height:1.00px;background:#e0e3ea;"></div>
<div class="b" style="left:340.00px;top:884.00px;width:1460.00px;height:1.00px;background:#e0e3ea;"></div>
<div class="b" style="left:340.00px;top:939.00px;width:1460.00px;height:1.00px;background:#e0e3ea;"></div>
<div class="t" style="left:461.80px;top:183.80px;height:30px;line-height:30px;font-size:18.2px;color:#5c6270;letter-spacing:0.317px;">Name</div>
<div class="t" style="left:853.00px;top:183.80px;height:30px;line-height:30px;font-size:18.2px;color:#5c6270;letter-spacing:0.375px;">Assignee</div>
<div class="t" style="left:1059.00px;top:183.80px;height:30px;line-height:30px;font-size:18.2px;color:#5c6270;letter-spacing:0.581px;">Status</div>
<div class="t" style="left:1203.80px;top:183.80px;height:30px;line-height:30px;font-size:18.2px;color:#5c6270;letter-spacing:0.732px;">Start date</div>
<div class="t" style="left:1349.00px;top:183.80px;height:30px;line-height:30px;font-size:18.2px;color:#5c6270;letter-spacing:0.519px;">Due date</div>
<div class="t" style="left:1625.00px;top:183.80px;height:30px;line-height:30px;font-size:18.2px;color:#5c6270;letter-spacing:0.598px;">Location</div>
<div class="t" style="left:1490.80px;top:183.80px;height:30px;line-height:30px;font-size:18.2px;color:#5c6270;letter-spacing:0.572px;width:109.50px;overflow:hidden;-webkit-mask-image:linear-gradient(to right,#000 93%,transparent 100%);">Status group</div>
<svg class="b" style="left:1165.00px;top:187.00px;" width="20" height="22" viewBox="0 0 20 22" fill="none"><path d="M10 19.2 V3.2 M5.6 7.6 L10 3.2 L14.4 7.6" stroke="#20242f" stroke-width="1.5" stroke-linecap="round" stroke-linejoin="round"/></svg>
<svg class="b" style="left:430.50px;top:245.96px;" width="18" height="16" viewBox="0 0 18 16" fill="none"><path d="M3.9 5.5 L9 10.3 L14.1 5.5" stroke="#20232c" stroke-width="1.35" stroke-linecap="round" stroke-linejoin="round"/></svg>
<div class="b" style="left:461.00px;top:236.80px;width:317.00px;height:32.20px;background:linear-gradient(to right,#e6eaf2 0%,#e6eaf2 93%,rgba(230,234,242,0.2) 100%);border-radius:8px;"></div>
<div class="t" style="left:472.00px;top:238.76px;height:30px;line-height:30px;font-size:18.4px;color:#171b26;letter-spacing:0.300px;width:303.50px;overflow:hidden;-webkit-mask-image:linear-gradient(to right,#000 96%,transparent 100%);">1. Creative Deliverables (Marketing)</div>
<div class="t" style="left:783.50px;top:238.76px;height:30px;line-height:30px;font-size:18.4px;color:#5c6270;">4</div>
<div class="t" style="left:1205.00px;top:238.76px;height:30px;line-height:30px;font-size:18.4px;color:#171b26;letter-spacing:1.101px;width:97.50px;overflow:hidden;-webkit-mask-image:linear-gradient(to right,#000 93%,transparent 100%);">16/01/2024</div>
<div class="t" style="left:1312.30px;top:239.76px;height:30px;line-height:30px;font-size:11.8px;color:#4d5464;letter-spacing:1.435px;font-weight:700;width:20.00px;overflow:hidden;-webkit-mask-image:linear-gradient(to right,#000 75%,transparent 100%);">MIN</div>
<div class="t" style="left:1349.00px;top:238.76px;height:30px;line-height:30px;font-size:18.4px;color:#171b26;letter-spacing:1.101px;width:91.00px;overflow:hidden;">22/03/2024</div>
<div class="t" style="left:1449.50px;top:239.76px;height:30px;line-height:30px;font-size:11.8px;color:#4d5464;letter-spacing:1.139px;font-weight:700;width:25.50px;overflow:hidden;-webkit-mask-image:linear-gradient(to right,#000 82%,transparent 100%);">MAX</div>
<div class="t" style="left:382.81px;top:293.58px;height:30px;line-height:30px;font-size:15.8px;color:#5c6270;">1</div>
<svg class="b" style="left:430.50px;top:300.48px;" width="18" height="16" viewBox="0 0 18 16" fill="none"><path d="M3.9 5.5 L9 10.3 L14.1 5.5" stroke="#20232c" stroke-width="1.35" stroke-linecap="round" stroke-linejoin="round"/></svg>
<svg class="b" style="left:463.70px;top:297.48px;" width="14.6" height="18.8" viewBox="0 0 14.6 18.8" fill="none"><rect x="0.85" y="3.0" width="12.9" height="14.9" rx="1.1" stroke="#15171f" stroke-width="1.65"/><rect x="3.4" y="0.75" width="7.8" height="2.9" rx="1.4" fill="#fff" stroke="#15171f" stroke-width="1.45"/><path d="M3.5 8.3 H11.1 M3.5 11.4 H11.1" stroke="#15171f" stroke-width="1.35"/></svg>
<div class="t" style="left:493.80px;top:293.58px;height:30px;line-height:30px;font-size:18.4px;color:#12151f;letter-spacing:0.221px;font-weight:700;">New Blog Content Project</div>
<div class="b" style="left:1059.00px;top:292.78px;width:71.00px;height:31.40px;background:#c7ebfb;border-radius:8px;"></div>
<div class="b" style="left:1064.40px;top:298.18px;width:7.60px;height:20.60px;background:#2d9ad8;border-radius:3.8px;"></div>
<div class="t" style="left:1080.80px;top:293.58px;height:30px;line-height:30px;font-size:18.4px;color:#171b26;letter-spacing:0.095px;">New</div>
<div class="t" style="left:1205.00px;top:293.58px;height:30px;line-height:30px;font-size:18.4px;color:#171b26;letter-spacing:1.045px;">13/02/2024</div>
<div class="t" style="left:1349.20px;top:293.58px;height:30px;line-height:30px;font-size:18.4px;color:#b9414f;letter-spacing:1.101px;">22/03/2024</div>
<div class="t" style="left:1491.00px;top:293.58px;height:30px;line-height:30px;font-size:18.4px;color:#171b26;letter-spacing:0.479px;">Active</div>
<div class="b" style="left:1624.50px;top:291.98px;width:124.30px;height:32.00px;background:#eef0f7;border-radius:7px;"></div>
<div class="t" style="left:1635.40px;top:293.58px;height:30px;line-height:30px;font-size:18.4px;color:#171b26;letter-spacing:0.107px;">1. Creativ...</div>
<div class="t" style="left:382.81px;top:348.50px;height:30px;line-height:30px;font-size:15.8px;color:#5c6270;">2</div>
<svg class="b" style="left:495.60px;top:354.20px;" width="18" height="18" viewBox="0 0 18 18" fill="none"><path d="M2.6 1.85 H14.2 C14.9 1.85 15.45 2.4 15.45 3.1 V11.6 L10.6 16.15 H2.6 C1.9 16.15 1.35 15.6 1.35 14.9 V3.1 C1.35 2.4 1.9 1.85 2.6 1.85 Z M15.3 11.2 H12 C11.2 11.2 10.7 11.8 10.7 12.5 V16" stroke="#15171f" stroke-width="1.65" stroke-linejoin="round"/></svg>
<div class="t" style="left:526.00px;top:348.50px;height:30px;line-height:30px;font-size:18.4px;color:#171b26;letter-spacing:0.508px;">0. Agree on Target Segment</div>
<svg class="b" style="left:852.40px;top:346.90px;" width="32" height="32" viewBox="0 0 32 32" fill="none"><defs><clipPath id="c852_346"><rect width="32" height="32" rx="7"/></clipPath></defs><g clip-path="url(#c852_346)"><rect width="32" height="32" fill="#e4e7e9"/><rect x="23.5" y="0" width="3.5" height="17" fill="#9a9c9e"/><rect x="27" y="0" width="5" height="32" fill="#eff1f1"/>
<path d="M0 32 L0.5 24 L7 19.4 L14 27 L23 22 L27 32 Z" fill="#aab6bc"/>
<path d="M22 23 L30 20 L31 30 L25 32Z" fill="#9ccbb0"/><path d="M25 22 L29 21 L29.5 26 L26 27Z" fill="#4f9a78"/>
<ellipse cx="15.4" cy="12.6" rx="8.2" ry="9.4" fill="#3b2e29" transform="rotate(-20 15.4 12.6)"/>
<ellipse cx="16" cy="15.2" rx="5.2" ry="6.8" fill="#c99c82" transform="rotate(-20 16 15.2)"/>
<path d="M10.8 17 C11.6 22.6 15.8 26 19.8 23 C21.6 21.2 22 18.4 21.8 16.2 C19.2 20.2 14.6 20.6 10.8 17Z" fill="#45352e"/>
<path d="M14.6 20.2 C16.2 21.2 18 20.8 19.4 19.4 C18 19.8 16.4 20.2 14.6 20.2Z" fill="#f3eae4"/></g></svg>
<div class="t" style="left:895.80px;top:348.50px;height:30px;line-height:30px;font-size:18.4px;color:#171b26;letter-spacing:0.475px;">David Martin</div>
<div class="b" style="left:1059.00px;top:347.70px;width:71.00px;height:31.40px;background:#c7ebfb;border-radius:8px;"></div>
<div class="b" style="left:1064.40px;top:353.10px;width:7.60px;height:20.60px;background:#2d9ad8;border-radius:3.8px;"></div>
<div class="t" style="left:1080.80px;top:348.50px;height:30px;line-height:30px;font-size:18.4px;color:#171b26;letter-spacing:0.095px;">New</div>
<div class="t" style="left:1491.00px;top:348.50px;height:30px;line-height:30px;font-size:18.4px;color:#171b26;letter-spacing:0.479px;">Active</div>
<div class="b" style="left:1624.50px;top:346.90px;width:124.30px;height:32.00px;background:#eef0f7;border-radius:7px;"></div>
<div class="t" style="left:1635.40px;top:348.50px;height:30px;line-height:30px;font-size:18.4px;color:#171b26;letter-spacing:0.209px;">New Blog ...</div>
<div class="t" style="left:382.81px;top:403.42px;height:30px;line-height:30px;font-size:15.8px;color:#5c6270;">3</div>
<svg class="b" style="left:495.60px;top:409.12px;" width="18" height="18" viewBox="0 0 18 18" fill="none"><path d="M2.6 1.85 H14.2 C14.9 1.85 15.45 2.4 15.45 3.1 V11.6 L10.6 16.15 H2.6 C1.9 16.15 1.35 15.6 1.35 14.9 V3.1 C1.35 2.4 1.9 1.85 2.6 1.85 Z M15.3 11.2 H12 C11.2 11.2 10.7 11.8 10.7 12.5 V16" stroke="#15171f" stroke-width="1.65" stroke-linejoin="round"/></svg>
<div class="t" style="left:526.60px;top:403.42px;height:30px;line-height:30px;font-size:18.4px;color:#171b26;letter-spacing:0.584px;width:298.50px;overflow:hidden;-webkit-mask-image:linear-gradient(to right,#000 95%,transparent 100%);">1. Approval (Verify fits into Editorial</div>
<svg class="b" style="left:852.40px;top:401.82px;" width="32" height="32" viewBox="0 0 32 32" fill="none"><defs><clipPath id="c852_401"><rect width="32" height="32" rx="7"/></clipPath></defs><g clip-path="url(#c852_401)"><rect width="32" height="32" fill="#b57f70"/><rect x="0" y="0" width="32" height="9" fill="#c79484"/>
<path d="M0 15 L8 13 L10 32 L0 32Z" fill="#d2a01f"/><path d="M32 15 L24 13 L22 32 L32 32Z" fill="#d2a01f"/>
<path d="M2 32 C4 27 10 26 16 26 C22 26 28 27 30 32Z" fill="#17171a"/>
<ellipse cx="16" cy="14.4" rx="7.4" ry="10.4" fill="#e2ad96"/>
<path d="M8.4 10.4 C8.4 3.4 23.6 3.4 23.6 10.4 C21 6.6 11 6.6 8.4 10.4Z" fill="#3a2a25"/>
<rect x="9.2" y="11" width="5.8" height="3.8" rx="1.3" stroke="#2a2020" stroke-width="0.9" fill="none"/><rect x="17" y="11" width="5.8" height="3.8" rx="1.3" stroke="#2a2020" stroke-width="0.9" fill="none"/>
<path d="M11.6 19.6 C14 22.4 18 22.4 20.4 19.6 C18 20.6 14 20.6 11.6 19.6Z" fill="#f6eeea"/></g></svg>
<div class="t" style="left:895.80px;top:403.42px;height:30px;line-height:30px;font-size:18.4px;color:#171b26;letter-spacing:0.210px;">Brandon Rob...</div>
<div class="b" style="left:1059.00px;top:402.62px;width:71.00px;height:31.40px;background:#c7ebfb;border-radius:8px;"></div>
<div class="b" style="left:1064.40px;top:408.02px;width:7.60px;height:20.60px;background:#2d9ad8;border-radius:3.8px;"></div>
<div class="t" style="left:1080.80px;top:403.42px;height:30px;line-height:30px;font-size:18.4px;color:#171b26;letter-spacing:0.095px;">New</div>
<div class="t" style="left:1205.00px;top:403.42px;height:30px;line-height:30px;font-size:18.4px;color:#171b26;letter-spacing:1.045px;">09/02/2024</div>
<div class="t" style="left:1349.20px;top:403.42px;height:30px;line-height:30px;font-size:18.4px;color:#b9414f;letter-spacing:1.101px;">09/02/2024</div>
<div class="t" style="left:1491.00px;top:403.42px;height:30px;line-height:30px;font-size:18.4px;color:#171b26;letter-spacing:0.479px;">Active</div>
<div class="b" style="left:1624.50px;top:401.82px;width:124.30px;height:32.00px;background:#eef0f7;border-radius:7px;"></div>
<div class="t" style="left:1635.40px;top:403.42px;height:30px;line-height:30px;font-size:18.4px;color:#171b26;letter-spacing:0.209px;">New Blog ...</div>
<div class="t" style="left:382.81px;top:458.34px;height:30px;line-height:30px;font-size:15.8px;color:#5c6270;">4</div>
<svg class="b" style="left:495.60px;top:464.04px;" width="18" height="18" viewBox="0 0 18 18" fill="none"><path d="M2.6 1.85 H14.2 C14.9 1.85 15.45 2.4 15.45 3.1 V11.6 L10.6 16.15 H2.6 C1.9 16.15 1.35 15.6 1.35 14.9 V3.1 C1.35 2.4 1.9 1.85 2.6 1.85 Z M15.3 11.2 H12 C11.2 11.2 10.7 11.8 10.7 12.5 V16" stroke="#15171f" stroke-width="1.65" stroke-linejoin="round"/></svg>
<div class="t" style="left:526.00px;top:458.34px;height:30px;line-height:30px;font-size:18.4px;color:#171b26;letter-spacing:0.542px;">3. Initial Draft of Content</div>
<svg class="b" style="left:852.40px;top:456.74px;" width="32" height="32" viewBox="0 0 32 32" fill="none"><defs><clipPath id="c852_456"><rect width="32" height="32" rx="7"/></clipPath></defs><g clip-path="url(#c852_456)"><rect width="32" height="32" fill="#b57f70"/><rect x="0" y="0" width="32" height="9" fill="#c79484"/>
<path d="M0 15 L8 13 L10 32 L0 32Z" fill="#d2a01f"/><path d="M32 15 L24 13 L22 32 L32 32Z" fill="#d2a01f"/>
<path d="M2 32 C4 27 10 26 16 26 C22 26 28 27 30 32Z" fill="#17171a"/>
<ellipse cx="16" cy="14.4" rx="7.4" ry="10.4" fill="#e2ad96"/>
<path d="M8.4 10.4 C8.4 3.4 23.6 3.4 23.6 10.4 C21 6.6 11 6.6 8.4 10.4Z" fill="#3a2a25"/>
<rect x="9.2" y="11" width="5.8" height="3.8" rx="1.3" stroke="#2a2020" stroke-width="0.9" fill="none"/><rect x="17" y="11" width="5.8" height="3.8" rx="1.3" stroke="#2a2020" stroke-width="0.9" fill="none"/>
<path d="M11.6 19.6 C14 22.4 18 22.4 20.4 19.6 C18 20.6 14 20.6 11.6 19.6Z" fill="#f6eeea"/></g></svg>
<div class="t" style="left:895.80px;top:458.34px;height:30px;line-height:30px;font-size:18.4px;color:#171b26;letter-spacing:0.210px;">Brandon Rob...</div>
<div class="b" style="left:1059.00px;top:457.54px;width:71.00px;height:31.40px;background:#c7ebfb;border-radius:8px;"></div>
<div class="b" style="left:1064.40px;top:462.94px;width:7.60px;height:20.60px;background:#2d9ad8;border-radius:3.8px;"></div>
<div class="t" style="left:1080.80px;top:458.34px;height:30px;line-height:30px;font-size:18.4px;color:#171b26;letter-spacing:0.095px;">New</div>
<div class="t" style="left:1205.00px;top:458.34px;height:30px;line-height:30px;font-size:18.4px;color:#171b26;letter-spacing:1.045px;">19/02/2024</div>
<div class="t" style="left:1349.20px;top:458.34px;height:30px;line-height:30px;font-size:18.4px;color:#b9414f;letter-spacing:1.101px;">19/02/2024</div>
<div class="t" style="left:1491.00px;top:458.34px;height:30px;line-height:30px;font-size:18.4px;color:#171b26;letter-spacing:0.479px;">Active</div>
<div class="b" style="left:1624.50px;top:456.74px;width:124.30px;height:32.00px;background:#eef0f7;border-radius:7px;"></div>
<div class="t" style="left:1635.40px;top:458.34px;height:30px;line-height:30px;font-size:18.4px;color:#171b26;letter-spacing:0.209px;">New Blog ...</div>
<div class="t" style="left:382.81px;top:513.26px;height:30px;line-height:30px;font-size:15.8px;color:#5c6270;">5</div>
<svg class="b" style="left:495.60px;top:518.96px;" width="18" height="18" viewBox="0 0 18 18" fill="none"><path d="M2.6 1.85 H14.2 C14.9 1.85 15.45 2.4 15.45 3.1 V11.6 L10.6 16.15 H2.6 C1.9 16.15 1.35 15.6 1.35 14.9 V3.1 C1.35 2.4 1.9 1.85 2.6 1.85 Z M15.3 11.2 H12 C11.2 11.2 10.7 11.8 10.7 12.5 V16" stroke="#15171f" stroke-width="1.65" stroke-linejoin="round"/></svg>
<div class="t" style="left:526.00px;top:513.26px;height:30px;line-height:30px;font-size:18.4px;color:#171b26;letter-spacing:0.517px;">5. Editing and Formatting</div>
<div class="b" style="left:1059.00px;top:512.46px;width:71.00px;height:31.40px;background:#c7ebfb;border-radius:8px;"></div>
<div class="b" style="left:1064.40px;top:517.86px;width:7.60px;height:20.60px;background:#2d9ad8;border-radius:3.8px;"></div>
<div class="t" style="left:1080.80px;top:513.26px;height:30px;line-height:30px;font-size:18.4px;color:#171b26;letter-spacing:0.095px;">New</div>
<div class="t" style="left:1205.00px;top:513.26px;height:30px;line-height:30px;font-size:18.4px;color:#171b26;letter-spacing:1.045px;">01/03/2024</div>
<div class="t" style="left:1349.20px;top:513.26px;height:30px;line-height:30px;font-size:18.4px;color:#b9414f;letter-spacing:1.101px;">07/03/2024</div>
<div class="t" style="left:1491.00px;top:513.26px;height:30px;line-height:30px;font-size:18.4px;color:#171b26;letter-spacing:0.479px;">Active</div>
<div class="b" style="left:1624.50px;top:511.66px;width:124.30px;height:32.00px;background:#eef0f7;border-radius:7px;"></div>
<div class="t" style="left:1635.40px;top:513.26px;height:30px;line-height:30px;font-size:18.4px;color:#171b26;letter-spacing:0.209px;">New Blog ...</div>
<div class="t" style="left:382.81px;top:568.18px;height:30px;line-height:30px;font-size:15.8px;color:#5c6270;">6</div>
<svg class="b" style="left:495.60px;top:573.88px;" width="18" height="18" viewBox="0 0 18 18" fill="none"><path d="M2.6 1.85 H14.2 C14.9 1.85 15.45 2.4 15.45 3.1 V11.6 L10.6 16.15 H2.6 C1.9 16.15 1.35 15.6 1.35 14.9 V3.1 C1.35 2.4 1.9 1.85 2.6 1.85 Z M15.3 11.2 H12 C11.2 11.2 10.7 11.8 10.7 12.5 V16" stroke="#15171f" stroke-width="1.65" stroke-linejoin="round"/></svg>
<div class="t" style="left:526.00px;top:568.18px;height:30px;line-height:30px;font-size:18.4px;color:#171b26;letter-spacing:0.101px;">6. Final Review</div>
<div class="b" style="left:1059.00px;top:567.38px;width:71.00px;height:31.40px;background:#c7ebfb;border-radius:8px;"></div>
<div class="b" style="left:1064.40px;top:572.78px;width:7.60px;height:20.60px;background:#2d9ad8;border-radius:3.8px;"></div>
<div class="t" style="left:1080.80px;top:568.18px;height:30px;line-height:30px;font-size:18.4px;color:#171b26;letter-spacing:0.095px;">New</div>
<div class="t" style="left:1349.20px;top:568.18px;height:30px;line-height:30px;font-size:18.4px;color:#b9414f;letter-spacing:1.101px;">12/03/2024</div>
<div class="t" style="left:1491.00px;top:568.18px;height:30px;line-height:30px;font-size:18.4px;color:#171b26;letter-spacing:0.479px;">Active</div>
<div class="b" style="left:1624.50px;top:566.58px;width:124.30px;height:32.00px;background:#eef0f7;border-radius:7px;"></div>
<div class="t" style="left:1635.40px;top:568.18px;height:30px;line-height:30px;font-size:18.4px;color:#171b26;letter-spacing:0.209px;">New Blog ...</div>
<div class="t" style="left:382.81px;top:623.10px;height:30px;line-height:30px;font-size:15.8px;color:#5c6270;">7</div>
<svg class="b" style="left:495.60px;top:628.80px;" width="18" height="18" viewBox="0 0 18 18" fill="none"><path d="M2.6 1.85 H14.2 C14.9 1.85 15.45 2.4 15.45 3.1 V11.6 L10.6 16.15 H2.6 C1.9 16.15 1.35 15.6 1.35 14.9 V3.1 C1.35 2.4 1.9 1.85 2.6 1.85 Z M15.3 11.2 H12 C11.2 11.2 10.7 11.8 10.7 12.5 V16" stroke="#15171f" stroke-width="1.65" stroke-linejoin="round"/></svg>
<div class="t" style="left:526.00px;top:623.10px;height:30px;line-height:30px;font-size:18.4px;color:#171b26;letter-spacing:0.330px;">7. Blog/Email Creation</div>
<div class="b" style="left:1059.00px;top:622.30px;width:71.00px;height:31.40px;background:#c7ebfb;border-radius:8px;"></div>
<div class="b" style="left:1064.40px;top:627.70px;width:7.60px;height:20.60px;background:#2d9ad8;border-radius:3.8px;"></div>
<div class="t" style="left:1080.80px;top:623.10px;height:30px;line-height:30px;font-size:18.4px;color:#171b26;letter-spacing:0.095px;">New</div>
<div class="t" style="left:1205.00px;top:623.10px;height:30px;line-height:30px;font-size:18.4px;color:#171b26;letter-spacing:1.045px;">08/03/2024</div>
<div class="t" style="left:1349.20px;top:623.10px;height:30px;line-height:30px;font-size:18.4px;color:#b9414f;letter-spacing:1.101px;">08/03/2024</div>
<div class="t" style="left:1491.00px;top:623.10px;height:30px;line-height:30px;font-size:18.4px;color:#171b26;letter-spacing:0.479px;">Active</div>
<div class="b" style="left:1624.50px;top:621.50px;width:124.30px;height:32.00px;background:#eef0f7;border-radius:7px;"></div>
<div class="t" style="left:1635.40px;top:623.10px;height:30px;line-height:30px;font-size:18.4px;color:#171b26;letter-spacing:0.209px;">New Blog ...</div>
<div class="t" style="left:382.81px;top:678.02px;height:30px;line-height:30px;font-size:15.8px;color:#5c6270;">8</div>
<svg class="b" style="left:495.60px;top:683.72px;" width="18" height="18" viewBox="0 0 18 18" fill="none"><path d="M2.6 1.85 H14.2 C14.9 1.85 15.45 2.4 15.45 3.1 V11.6 L10.6 16.15 H2.6 C1.9 16.15 1.35 15.6 1.35 14.9 V3.1 C1.35 2.4 1.9 1.85 2.6 1.85 Z M15.3 11.2 H12 C11.2 11.2 10.7 11.8 10.7 12.5 V16" stroke="#15171f" stroke-width="1.65" stroke-linejoin="round"/></svg>
<div class="t" style="left:526.00px;top:678.02px;height:30px;line-height:30px;font-size:18.4px;color:#171b26;letter-spacing:0.459px;">8. Launch</div>
<div class="b" style="left:1059.00px;top:677.22px;width:71.00px;height:31.40px;background:#c7ebfb;border-radius:8px;"></div>
<div class="b" style="left:1064.40px;top:682.62px;width:7.60px;height:20.60px;background:#2d9ad8;border-radius:3.8px;"></div>
<div class="t" style="left:1080.80px;top:678.02px;height:30px;line-height:30px;font-size:18.4px;color:#171b26;letter-spacing:0.095px;">New</div>
<div class="t" style="left:1205.00px;top:678.02px;height:30px;line-height:30px;font-size:18.4px;color:#171b26;letter-spacing:1.045px;">13/03/2024</div>
<div class="t" style="left:1349.20px;top:678.02px;height:30px;line-height:30px;font-size:18.4px;color:#b9414f;letter-spacing:1.101px;">22/03/2024</div>
<div class="t" style="left:1491.00px;top:678.02px;height:30px;line-height:30px;font-size:18.4px;color:#171b26;letter-spacing:0.479px;">Active</div>
<div class="b" style="left:1624.50px;top:676.42px;width:124.30px;height:32.00px;background:#eef0f7;border-radius:7px;"></div>
<div class="t" style="left:1635.40px;top:678.02px;height:30px;line-height:30px;font-size:18.4px;color:#171b26;letter-spacing:0.209px;">New Blog ...</div>
<div class="t" style="left:382.81px;top:732.94px;height:30px;line-height:30px;font-size:15.8px;color:#5c6270;">9</div>
<svg class="b" style="left:495.60px;top:738.64px;" width="18" height="18" viewBox="0 0 18 18" fill="none"><path d="M2.6 1.85 H14.2 C14.9 1.85 15.45 2.4 15.45 3.1 V11.6 L10.6 16.15 H2.6 C1.9 16.15 1.35 15.6 1.35 14.9 V3.1 C1.35 2.4 1.9 1.85 2.6 1.85 Z M15.3 11.2 H12 C11.2 11.2 10.7 11.8 10.7 12.5 V16" stroke="#15171f" stroke-width="1.65" stroke-linejoin="round"/></svg>
<div class="t" style="left:526.00px;top:732.94px;height:30px;line-height:30px;font-size:18.4px;color:#171b26;letter-spacing:0.422px;">2. Schedule Blog Post</div>
<svg class="b" style="left:852.40px;top:731.34px;" width="32" height="32" viewBox="0 0 32 32" fill="none"><defs><clipPath id="c852_731"><rect width="32" height="32" rx="7"/></clipPath></defs><g clip-path="url(#c852_731)"><rect width="32" height="32" fill="#e4e7e9"/><rect x="23.5" y="0" width="3.5" height="17" fill="#9a9c9e"/><rect x="27" y="0" width="5" height="32" fill="#eff1f1"/>
<path d="M0 32 L0.5 24 L7 19.4 L14 27 L23 22 L27 32 Z" fill="#aab6bc"/>
<path d="M22 23 L30 20 L31 30 L25 32Z" fill="#9ccbb0"/><path d="M25 22 L29 21 L29.5 26 L26 27Z" fill="#4f9a78"/>
<ellipse cx="15.4" cy="12.6" rx="8.2" ry="9.4" fill="#3b2e29" transform="rotate(-20 15.4 12.6)"/>
<ellipse cx="16" cy="15.2" rx="5.2" ry="6.8" fill="#c99c82" transform="rotate(-20 16 15.2)"/>
<path d="M10.8 17 C11.6 22.6 15.8 26 19.8 23 C21.6 21.2 22 18.4 21.8 16.2 C19.2 20.2 14.6 20.6 10.8 17Z" fill="#45352e"/>
<path d="M14.6 20.2 C16.2 21.2 18 20.8 19.4 19.4 C18 19.8 16.4 20.2 14.6 20.2Z" fill="#f3eae4"/></g></svg>
<div class="t" style="left:895.80px;top:732.94px;height:30px;line-height:30px;font-size:18.4px;color:#171b26;letter-spacing:0.475px;">David Martin</div>
<div class="b" style="left:1059.20px;top:732.14px;width:126.60px;height:31.40px;background:#c9f4f6;border-radius:8px;border-radius:8px 3px 3px 8px;"></div>
<div class="b" style="left:1064.40px;top:737.54px;width:7.60px;height:20.60px;background:#3cc0c8;border-radius:3.8px;"></div>
<div class="t" style="left:1080.80px;top:732.94px;height:30px;line-height:30px;font-size:18.4px;color:#171b26;letter-spacing:0.241px;">In Progress</div>
<div class="t" style="left:1205.00px;top:732.94px;height:30px;line-height:30px;font-size:18.4px;color:#171b26;letter-spacing:1.045px;">12/02/2024</div>
<div class="t" style="left:1349.20px;top:732.94px;height:30px;line-height:30px;font-size:18.4px;color:#b9414f;letter-spacing:1.101px;">12/02/2024</div>
<div class="t" style="left:1491.00px;top:732.94px;height:30px;line-height:30px;font-size:18.4px;color:#171b26;letter-spacing:0.479px;">Active</div>
<div class="b" style="left:1624.50px;top:731.34px;width:124.30px;height:32.00px;background:#eef0f7;border-radius:7px;"></div>
<div class="t" style="left:1635.40px;top:732.94px;height:30px;line-height:30px;font-size:18.4px;color:#171b26;letter-spacing:0.209px;">New Blog ...</div>
<div class="t" style="left:377.81px;top:787.86px;height:30px;line-height:30px;font-size:15.8px;color:#5c6270;letter-spacing:1.200px;">10</div>
<svg class="b" style="left:495.60px;top:793.56px;" width="18" height="18" viewBox="0 0 18 18" fill="none"><path d="M2.6 1.85 H14.2 C14.9 1.85 15.45 2.4 15.45 3.1 V11.6 L10.6 16.15 H2.6 C1.9 16.15 1.35 15.6 1.35 14.9 V3.1 C1.35 2.4 1.9 1.85 2.6 1.85 Z M15.3 11.2 H12 C11.2 11.2 10.7 11.8 10.7 12.5 V16" stroke="#15171f" stroke-width="1.65" stroke-linejoin="round"/></svg>
<div class="t" style="left:526.00px;top:787.86px;height:30px;line-height:30px;font-size:18.4px;color:#171b26;letter-spacing:0.376px;">4. Request Graphics</div>
<svg class="b" style="left:852.40px;top:786.26px;" width="32" height="32" viewBox="0 0 32 32" fill="none"><defs><clipPath id="c852_786"><rect width="32" height="32" rx="7"/></clipPath></defs><g clip-path="url(#c852_786)"><rect width="32" height="32" fill="#e4e7e9"/><rect x="23.5" y="0" width="3.5" height="17" fill="#9a9c9e"/><rect x="27" y="0" width="5" height="32" fill="#eff1f1"/>
<path d="M0 32 L0.5 24 L7 19.4 L14 27 L23 22 L27 32 Z" fill="#aab6bc"/>
<path d="M22 23 L30 20 L31 30 L25 32Z" fill="#9ccbb0"/><path d="M25 22 L29 21 L29.5 26 L26 27Z" fill="#4f9a78"/>
<ellipse cx="15.4" cy="12.6" rx="8.2" ry="9.4" fill="#3b2e29" transform="rotate(-20 15.4 12.6)"/>
<ellipse cx="16" cy="15.2" rx="5.2" ry="6.8" fill="#c99c82" transform="rotate(-20 16 15.2)"/>
<path d="M10.8 17 C11.6 22.6 15.8 26 19.8 23 C21.6 21.2 22 18.4 21.8 16.2 C19.2 20.2 14.6 20.6 10.8 17Z" fill="#45352e"/>
<path d="M14.6 20.2 C16.2 21.2 18 20.8 19.4 19.4 C18 19.8 16.4 20.2 14.6 20.2Z" fill="#f3eae4"/></g></svg>
<div class="t" style="left:895.80px;top:787.86px;height:30px;line-height:30px;font-size:18.4px;color:#171b26;letter-spacing:0.475px;">David Martin</div>
<div class="b" style="left:1059.20px;top:787.06px;width:126.60px;height:31.40px;background:#c9f4f6;border-radius:8px;border-radius:8px 3px 3px 8px;"></div>
<div class="b" style="left:1064.40px;top:792.46px;width:7.60px;height:20.60px;background:#3cc0c8;border-radius:3.8px;"></div>
<div class="t" style="left:1080.80px;top:787.86px;height:30px;line-height:30px;font-size:18.4px;color:#171b26;letter-spacing:0.241px;">In Progress</div>
<div class="t" style="left:1205.00px;top:787.86px;height:30px;line-height:30px;font-size:18.4px;color:#171b26;letter-spacing:1.045px;">26/02/2024</div>
<div class="t" style="left:1349.20px;top:787.86px;height:30px;line-height:30px;font-size:18.4px;color:#b9414f;letter-spacing:1.101px;">26/02/2024</div>
<div class="t" style="left:1491.00px;top:787.86px;height:30px;line-height:30px;font-size:18.4px;color:#171b26;letter-spacing:0.479px;">Active</div>
<div class="b" style="left:1624.50px;top:786.26px;width:124.30px;height:32.00px;background:#eef0f7;border-radius:7px;"></div>
<div class="t" style="left:1635.40px;top:787.86px;height:30px;line-height:30px;font-size:18.4px;color:#171b26;letter-spacing:0.209px;">New Blog ...</div>
<div class="t" style="left:378.40px;top:842.78px;height:30px;line-height:30px;font-size:15.8px;color:#5c6270;letter-spacing:1.200px;">11</div>
<svg class="b" style="left:430.50px;top:849.68px;" width="18" height="16" viewBox="0 0 18 16" fill="none"><path d="M3.9 5.5 L9 10.3 L14.1 5.5" stroke="#20232c" stroke-width="1.35" stroke-linecap="round" stroke-linejoin="round"/></svg>
<svg class="b" style="left:463.70px;top:846.68px;" width="14.6" height="18.8" viewBox="0 0 14.6 18.8" fill="none"><rect x="0.85" y="3.0" width="12.9" height="14.9" rx="1.1" stroke="#15171f" stroke-width="1.65"/><rect x="3.4" y="0.75" width="7.8" height="2.9" rx="1.4" fill="#fff" stroke="#15171f" stroke-width="1.45"/><path d="M3.5 8.3 H11.1 M3.5 11.4 H11.1" stroke="#15171f" stroke-width="1.35"/></svg>
<div class="t" style="left:493.80px;top:842.78px;height:30px;line-height:30px;font-size:18.4px;color:#12151f;letter-spacing:0.140px;font-weight:700;">Asset Request</div>
<svg class="b" style="left:852.40px;top:841.18px;" width="32" height="32" viewBox="0 0 32 32" fill="none"><defs><clipPath id="c852_841"><rect width="32" height="32" rx="7"/></clipPath></defs><g clip-path="url(#c852_841)"><rect width="32" height="32" fill="#e3e2e1"/><rect x="4" y="0" width="22" height="3.4" fill="#b9b8b8"/><rect x="0" y="20" width="7" height="5" fill="#cfcfce"/>
<path d="M16 1.6 C21.6 1.2 25.4 5.6 25 11.4 C26.4 15.6 25.6 21.2 23.6 25 L8.6 25 C6.4 21.6 6.2 16.6 7.6 12.6 C6.8 6.8 10.6 1.8 16 1.6 Z" fill="#3b3131"/>
<path d="M14.2 18 L19.8 18 L21.2 32 L12.2 32 Z" fill="#e8cabd"/>
<ellipse cx="17" cy="13.6" rx="4.7" ry="6.9" fill="#d6a796"/>
<path d="M12.8 11.6 H21.4" stroke="#2a2224" stroke-width="1.1"/>
<path d="M14.8 16.8 C16 17.8 18 17.8 19 16.6" stroke="#a9584f" stroke-width="0.9" fill="none"/>
<path d="M1.6 32 L3.4 28 L11.8 24.6 L13.4 32 Z" fill="#17a596"/><path d="M8 26 L12 24.6 L13.4 32 L10 32Z" fill="#0f6f68"/>
<path d="M20.6 32 L21.4 24.4 L28.8 27 L30.6 32 Z" fill="#1fc0b0"/></g></svg>
<div class="t" style="left:895.80px;top:842.78px;height:30px;line-height:30px;font-size:18.4px;color:#171b26;letter-spacing:0.322px;">Lisa Simpson</div>
<div class="b" style="left:1059.20px;top:841.98px;width:126.60px;height:31.40px;background:#c9f4f6;border-radius:8px;border-radius:8px 3px 3px 8px;"></div>
<div class="b" style="left:1064.40px;top:847.38px;width:7.60px;height:20.60px;background:#3cc0c8;border-radius:3.8px;"></div>
<div class="t" style="left:1080.80px;top:842.78px;height:30px;line-height:30px;font-size:18.4px;color:#171b26;letter-spacing:0.241px;">In Progress</div>
<div class="t" style="left:1205.00px;top:842.78px;height:30px;line-height:30px;font-size:18.4px;color:#171b26;letter-spacing:1.045px;">16/01/2024</div>
<div class="t" style="left:1349.20px;top:842.78px;height:30px;line-height:30px;font-size:18.4px;color:#b9414f;letter-spacing:1.101px;">08/02/2024</div>
<div class="t" style="left:1491.00px;top:842.78px;height:30px;line-height:30px;font-size:18.4px;color:#171b26;letter-spacing:0.479px;">Active</div>
<div class="b" style="left:1624.50px;top:841.18px;width:124.30px;height:32.00px;background:#eef0f7;border-radius:7px;"></div>
<div class="t" style="left:1635.40px;top:842.78px;height:30px;line-height:30px;font-size:18.4px;color:#171b26;letter-spacing:0.107px;">1. Creativ...</div>
<div class="t" style="left:377.81px;top:897.70px;height:30px;line-height:30px;font-size:15.8px;color:#5c6270;letter-spacing:1.200px;">12</div>
<svg class="b" style="left:495.60px;top:903.40px;" width="18" height="18" viewBox="0 0 18 18" fill="none"><path d="M2.6 1.85 H14.2 C14.9 1.85 15.45 2.4 15.45 3.1 V11.6 L10.6 16.15 H2.6 C1.9 16.15 1.35 15.6 1.35 14.9 V3.1 C1.35 2.4 1.9 1.85 2.6 1.85 Z M15.3 11.2 H12 C11.2 11.2 10.7 11.8 10.7 12.5 V16" stroke="#15171f" stroke-width="1.65" stroke-linejoin="round"/></svg>
<div class="t" style="left:526.00px;top:897.70px;height:30px;line-height:30px;font-size:18.4px;color:#171b26;letter-spacing:0.214px;">4. Review</div>
<div class="b" style="left:1059.00px;top:896.90px;width:71.00px;height:31.40px;background:#c7ebfb;border-radius:8px;"></div>
<div class="b" style="left:1064.40px;top:902.30px;width:7.60px;height:20.60px;background:#2d9ad8;border-radius:3.8px;"></div>
<div class="t" style="left:1080.80px;top:897.70px;height:30px;line-height:30px;font-size:18.4px;color:#171b26;letter-spacing:0.095px;">New</div>
<div class="t" style="left:1205.00px;top:897.70px;height:30px;line-height:30px;font-size:18.4px;color:#171b26;letter-spacing:1.045px;">31/01/2024</div>
<div class="t" style="left:1349.20px;top:897.70px;height:30px;line-height:30px;font-size:18.4px;color:#b9414f;letter-spacing:1.101px;">05/02/2024</div>
<div class="t" style="left:1491.00px;top:897.70px;height:30px;line-height:30px;font-size:18.4px;color:#171b26;letter-spacing:0.479px;">Active</div>
<div class="b" style="left:1624.50px;top:896.10px;width:124.30px;height:32.00px;background:#eef0f7;border-radius:7px;"></div>
<div class="t" style="left:1635.40px;top:897.70px;height:30px;line-height:30px;font-size:18.4px;color:#171b26;letter-spacing:0.116px;">Asset Req...</div>
<div class="t" style="left:377.81px;top:952.62px;height:30px;line-height:30px;font-size:15.8px;color:#5c6270;letter-spacing:1.200px;">13</div>
<svg class="b" style="left:495.60px;top:958.32px;" width="18" height="18" viewBox="0 0 18 18" fill="none"><path d="M2.6 1.85 H14.2 C14.9 1.85 15.45 2.4 15.45 3.1 V11.6 L10.6 16.15 H2.6 C1.9 16.15 1.35 15.6 1.35 14.9 V3.1 C1.35 2.4 1.9 1.85 2.6 1.85 Z M15.3 11.2 H12 C11.2 11.2 10.7 11.8 10.7 12.5 V16" stroke="#15171f" stroke-width="1.65" stroke-linejoin="round"/></svg>
<div class="t" style="left:526.00px;top:952.62px;height:30px;line-height:30px;font-size:18.4px;color:#171b26;letter-spacing:0.543px;">5. Approval</div>
<div class="b" style="left:1059.00px;top:951.82px;width:71.00px;height:31.40px;background:#c7ebfb;border-radius:8px;"></div>
<div class="b" style="left:1064.40px;top:957.22px;width:7.60px;height:20.60px;background:#2d9ad8;border-radius:3.8px;"></div>
<div class="t" style="left:1080.80px;top:952.62px;height:30px;line-height:30px;font-size:18.4px;color:#171b26;letter-spacing:0.095px;">New</div>
<div class="t" style="left:1205.00px;top:952.62px;height:30px;line-height:30px;font-size:18.4px;color:#171b26;letter-spacing:1.045px;">06/02/2024</div>
<div class="t" style="left:1349.20px;top:952.62px;height:30px;line-height:30px;font-size:18.4px;color:#b9414f;letter-spacing:1.101px;">06/02/2024</div>
<div class="t" style="left:1491.00px;top:952.62px;height:30px;line-height:30px;font-size:18.4px;color:#171b26;letter-spacing:0.479px;">Active</div>
<div class="b" style="left:1624.50px;top:951.02px;width:124.30px;height:32.00px;background:#eef0f7;border-radius:7px;"></div>
<div class="t" style="left:1635.40px;top:952.62px;height:30px;line-height:30px;font-size:18.4px;color:#171b26;letter-spacing:0.116px;">Asset Req...</div>
<div class="b" style="left:340.00px;top:986.40px;width:1460.00px;height:56.00px;background:#fff;box-shadow:0 -2px 5px rgba(30,40,70,.09);"></div>
<div class="b" style="left:340.00px;top:986.00px;width:1460.00px;height:1.20px;background:#e6e8ee;"></div>
<div class="b" style="left:340.00px;top:1026.00px;width:1460.00px;height:16.00px;background:linear-gradient(to bottom,rgba(240,240,242,0) 0%,rgba(243,243,244,1) 100%);"></div>
<svg class="b" style="left:429.00px;top:1005.00px;" width="20" height="20" viewBox="0 0 20 20" fill="none"><path d="M10 3.2 V16.8 M3.2 10 H16.8" stroke="#15171f" stroke-width="1.6" stroke-linecap="round"/></svg>
<div class="t" style="left:461.00px;top:1000.60px;height:30px;line-height:30px;font-size:18.4px;color:#171b26;letter-spacing:0.572px;">Item</div>
<svg class="b" style="left:510.00px;top:1005.00px;" width="50" height="20" viewBox="0 0 50 20" fill="none"><path d="M2.6 9.6 L7.4 4.4 L12.2 9.6" stroke="#8f9196" stroke-width="1.4" stroke-linecap="round" stroke-linejoin="round"/><path d="M24.4 3.6 L17.6 10.6 H21.2 V16.2 H27.6 V10.6 H31.2 Z" stroke="#8f9196" stroke-width="1.3" stroke-linejoin="round"/></svg>
<div class="t" style="left:544.50px;top:1000.80px;height:30px;line-height:30px;font-size:17.4px;color:#8f9196;">N</div>
<div class="b" style="left:0.00px;top:1041.80px;width:1800.00px;height:3.20px;background:#0a0a0c;"></div>
<svg class="b" style="left:0.00px;top:1030.00px;" width="13" height="13" viewBox="0 0 13 13" fill="none"><path d="M0 0 V13 H13 C5 13 0 8 0 0Z" fill="#0a0a0c"/></svg>
<svg class="b" style="left:1199.00px;top:168.00px;" width="20" height="26" viewBox="0 0 20 26" fill="none"><path d="M2.6 2 V19.4 L6.8 15.6 L9.8 22.4 L12.6 21.2 L9.6 14.6 H15.2 Z" fill="#111" stroke="#fff" stroke-width="1.3" stroke-linejoin="round"/></svg>
</body></html>
